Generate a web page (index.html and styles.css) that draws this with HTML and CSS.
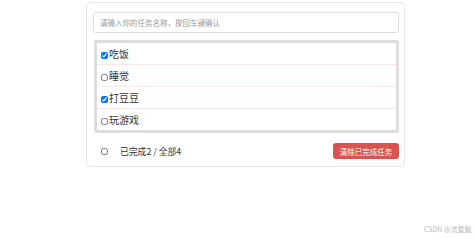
FILE: index.html
```html
<!DOCTYPE html>
<html lang="zh">
<head>
  <meta charset="UTF-8">
  <title>Todo List</title>
  <link rel="stylesheet" href="styles.css">
</head>
<body>
  <div class="todo-wrap">
    <input class="todo-input" type="text" placeholder="请输入你的任务名称，按回车键确认">

    <ul class="todo-list">
      <li><label><input type="checkbox" checked>吃饭</label></li>
      <li><label><input type="checkbox">睡觉</label></li>
      <li><label><input type="checkbox" checked>打豆豆</label></li>
      <li><label><input type="checkbox">玩游戏</label></li>
    </ul>

    <div class="todo-footer">
      <input type="checkbox" class="check-all">
      <span class="count">已完成2 / 全部4</span>
      <button class="btn-danger">清除已完成任务</button>
    </div>
  </div>

  <div class="watermark">CSDN @流星魁</div>
</body>
</html>
```

FILE: styles.css
```css
body {
  margin: 0;
  padding: 0;
  width: 474px;
  height: 239px;
  background: #fff;
  font-family: "Microsoft YaHei", "Noto Sans CJK SC", "Liberation Sans", sans-serif;
  color: #333;
  position: relative;
  overflow: hidden;
}

.todo-wrap {
  width: 306px;
  margin: 2px 0 0 86px;
  padding: 9px 5px 0 6px;
  border: 1px solid #e6e6e6;
  border-radius: 4px;
  height: 154px;
}

.todo-input {
  display: block;
  box-sizing: border-box;
  width: 306px;
  height: 21px;
  padding: 0 6px;
  border: 1px solid #ddd;
  border-radius: 3px;
  font-size: 7.5px;
  font-family: inherit;
  outline: none;
}

.todo-input::placeholder {
  color: #999;
}

.todo-list {
  list-style: none;
  margin: 7px 0 0 1px;
  padding: 0;
  width: 299px;
  border: 3px solid #ddd;
  border-radius: 2px;
}

.todo-list li {
  height: 21px;
  line-height: 21px;
  padding: 0 4px;
  border-bottom: 1px solid #fbe7ea;
  font-size: 10px;
}

.todo-list li:last-child {
  border-bottom: none;
}

.todo-list input {
  width: 7px;
  height: 7px;
  margin: 0 1px 0 0;
  vertical-align: -1px;
}

.todo-footer {
  display: flex;
  align-items: center;
  height: 36px;
  padding-left: 8px;
}

.check-all {
  width: 7px;
  height: 7px;
  margin: 0;
}

.count {
  margin-left: 12px;
  font-size: 8.8px;
}

.btn-danger {
  margin-left: auto;
  margin-right: 0;
  width: 66px;
  height: 16px;
  padding: 0;
  border: none;
  border-radius: 3px;
  background: #d9534f;
  color: #fff;
  font-size: 7.5px;
  font-family: inherit;
}

.watermark {
  position: absolute;
  left: 424px;
  top: 224px;
  font-size: 7px;
  color: #bbb;
}
```
